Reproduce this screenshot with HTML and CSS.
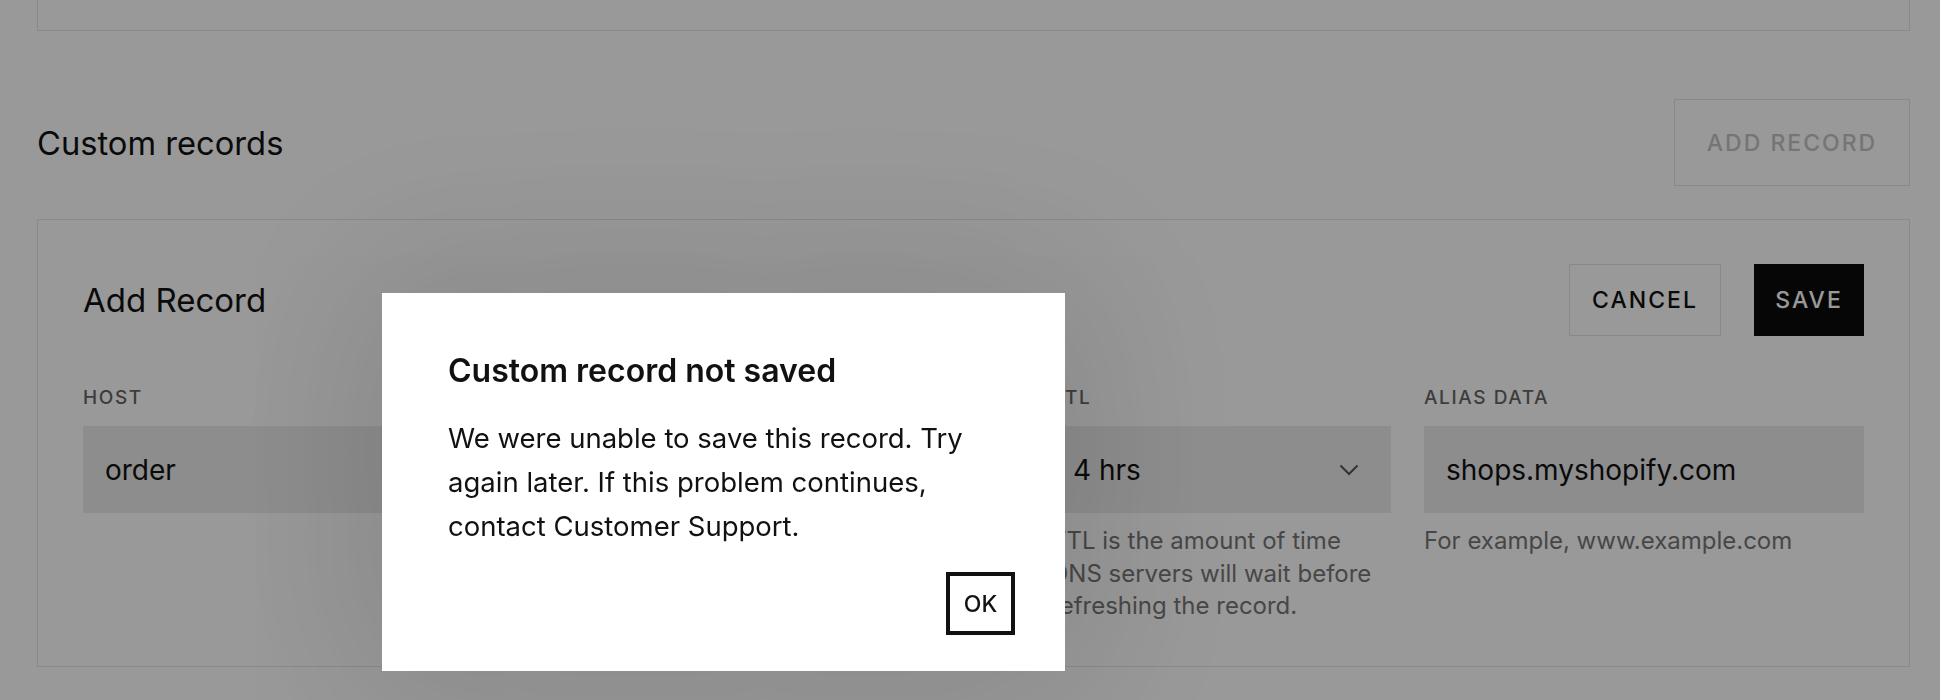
FILE: index.html
```html
<!DOCTYPE html>
<html lang="en">
<head>
<meta charset="utf-8">
<title>Custom records</title>
<link rel="stylesheet" href="styles.css">
</head>
<body>
<main class="page">
  <div class="prev-card"></div>

  <div class="section-header">
    <h2 class="section-title">Custom records</h2>
    <button class="btn btn-outline btn-disabled btn-add">ADD RECORD</button>
  </div>

  <section class="record-card">
    <div class="card-header">
      <h3 class="card-title">Add Record</h3>
      <div class="card-actions">
        <button class="btn btn-outline btn-cancel">CANCEL</button>
        <button class="btn btn-solid btn-save">SAVE</button>
      </div>
    </div>

    <div class="fields">
      <div class="field">
        <div class="field-label">HOST</div>
        <div class="field-input">order</div>
      </div>
      <div class="field">
        <div class="field-label">TYPE</div>
        <div class="field-input field-select">
          <span>ALIAS</span>
          <svg class="chevron" width="20" height="12" viewBox="0 0 20 12"><path d="M1.5 1.5 L10 10 L18.5 1.5" fill="none" stroke="#555" stroke-width="2"/></svg>
        </div>
      </div>
      <div class="field">
        <div class="field-label">TTL</div>
        <div class="field-input field-select">
          <span>4 hrs</span>
          <svg class="chevron" width="20" height="12" viewBox="0 0 20 12"><path d="M1.5 1.5 L10 10 L18.5 1.5" fill="none" stroke="#555" stroke-width="2"/></svg>
        </div>
        <p class="field-help">TTL is the amount of time DNS servers will wait before refreshing the record.</p>
      </div>
      <div class="field">
        <div class="field-label">ALIAS DATA</div>
        <div class="field-input">shops.myshopify.com</div>
        <p class="field-help">For example, www.example.com</p>
      </div>
    </div>
  </section>
</main>

<div class="overlay"></div>

<div class="modal" role="dialog">
  <h2 class="modal-title">Custom record not saved</h2>
  <p class="modal-text">We were unable to save this record. Try again later. If this problem continues, contact Customer Support.</p>
  <div class="modal-actions">
    <button class="btn-ok">OK</button>
  </div>
</div>
</body>
</html>
```

FILE: styles.css
```css
* { box-sizing: border-box; }

html, body {
  margin: 0;
  padding: 0;
  background: #ffffff;
  font-family: "Inter", "Liberation Sans", sans-serif;
  color: #111111;
  overflow: hidden;
}

.page {
  padding: 0 30px 0 37px;
}

.prev-card {
  height: 31px;
  border: 1px solid #e6e6e6;
  border-top: 0;
}

.section-header {
  margin-top: 68px;
  display: flex;
  justify-content: space-between;
  align-items: center;
}

.section-title {
  margin: 0;
  font-size: 32.7px;
  font-weight: 400;
  line-height: 40px;
}

.btn {
  font-family: "Inter", "Liberation Sans", sans-serif;
  font-size: 23px;
  font-weight: 500;
  letter-spacing: 2px;
  background: transparent;
  display: flex;
  align-items: center;
  justify-content: center;
  padding: 0;
}

.btn-outline {
  border: 1px solid #e3e3e3;
  color: #111111;
}

.btn-disabled {
  color: #c4c4c4;
}

.btn-add {
  width: 236px;
  height: 87px;
}

.record-card {
  margin-top: 33px;
  border: 1px solid #e6e6e6;
  padding: 44px 45px 43px 45px;
}

.card-header {
  display: flex;
  justify-content: space-between;
  align-items: center;
}

.card-title {
  margin: 0;
  font-size: 33px;
  font-weight: 400;
  line-height: 40px;
}

.card-actions {
  display: flex;
  gap: 33px;
}

.btn-cancel {
  width: 152px;
  height: 72px;
}

.btn-save {
  width: 110px;
  height: 72px;
}

.btn-solid {
  background: #0b0b0b;
  border: 0;
  color: #ffffff;
}

.fields {
  margin-top: 50px;
  display: grid;
  grid-template-columns: 451fr 451fr 340fr 440fr;
  column-gap: 33px;
}

.field-label {
  font-size: 19px;
  line-height: 24px;
  font-weight: 500;
  letter-spacing: 1.6px;
  color: #666666;
  margin-bottom: 16px;
}

.field-input {
  height: 87px;
  background: #ececec;
  padding: 0 22px;
  display: flex;
  align-items: center;
  font-size: 28px;
  color: #111111;
}

.field-select {
  justify-content: space-between;
  padding-right: 32px;
}

.chevron {
  display: block;
}

.field-help {
  margin: 12px 0 0;
  font-size: 24px;
  line-height: 32.5px;
  color: #777777;
}

.overlay {
  position: fixed;
  inset: 0;
  background: rgba(0, 0, 0, 0.4);
}

.modal {
  position: fixed;
  left: 382px;
  top: 293px;
  width: 683px;
  height: 378px;
  background: #ffffff;
  padding: 59px 50px 36px 66px;
  box-shadow: 0 0 180px 30px rgba(0, 0, 0, 0.12);
  display: flex;
  flex-direction: column;
}

.modal-title {
  margin: 0;
  font-size: 32px;
  line-height: 38px;
  font-weight: 600;
  color: #111111;
}

.modal-text {
  margin: 26px 0 0;
  font-size: 27.5px;
  line-height: 44px;
  color: #111111;
  max-width: 545px;
}

.modal-actions {
  margin-top: auto;
  display: flex;
  justify-content: flex-end;
}

.btn-ok {
  width: 69px;
  height: 63px;
  border: 4px solid #111111;
  background: #ffffff;
  font-family: "Inter", "Liberation Sans", sans-serif;
  font-size: 23px;
  font-weight: 500;
  color: #111111;
  padding: 0;
}
```
